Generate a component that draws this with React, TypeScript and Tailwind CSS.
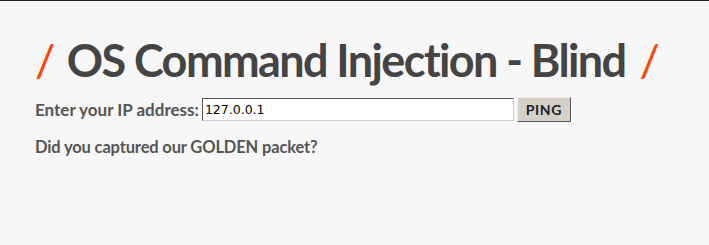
import React from "react";

const App = () => {
  return (
    <div className="w-[709px] h-[245px] bg-[#f7f7f7] border-t border-[#222] overflow-hidden" style={{ fontFamily: "Lato, 'Noto Sans', sans-serif" }}>
      <div className="pl-[35px] pt-[29px]">
        <h1 className="flex items-center whitespace-nowrap text-[45px] leading-[60px] font-bold text-[#444] tracking-[-1.6px]">
          <span className="text-[#ff4500] font-normal mr-[13px]">/</span>
          <span>OS Command Injection - Blind</span>
          <span className="text-[#ff4500] font-normal ml-[14px]">/</span>
        </h1>
        <form className="mt-[7px] flex items-center text-[17px] font-bold text-[#555]" onSubmit={(e) => e.preventDefault()}>
          <label htmlFor="ip">Enter your IP address:</label>
          <input
            id="ip"
            defaultValue="127.0.0.1"
            className="ml-[3px] w-[312px] h-[23px] bg-white border border-t-[#555] border-l-[#555] border-b-[#ccc] border-r-[#ccc] px-[2px] text-[12.5px] font-normal text-black outline-none"
            style={{ fontFamily: "'DejaVu Sans', sans-serif" }}
          />
          <button
            type="submit"
            className="ml-[3px] w-[54px] h-[25px] bg-[#d4d0c8] border border-t-[#eee] border-l-[#eee] border-b-[#555] border-r-[#555] text-[14px] font-bold text-[#222] tracking-[0.6px]"
          >
            PING
          </button>
        </form>
        <p className="mt-[12px] text-[16.5px] font-bold text-[#555] tracking-[-0.15px]">Did you captured our GOLDEN packet?</p>
      </div>
    </div>
  );
};

export default App;
